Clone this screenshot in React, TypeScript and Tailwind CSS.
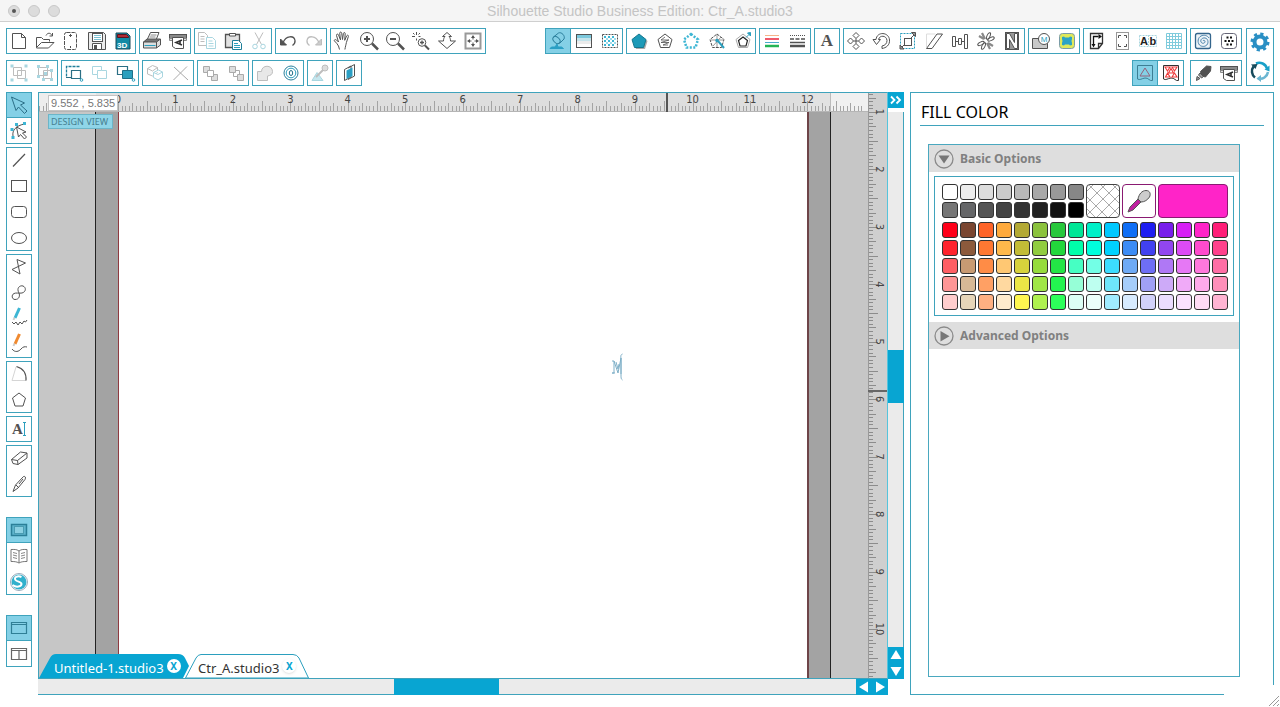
import React from 'react';

type Tool = { label: string; icon: React.ReactNode; active?: boolean };

const DARK = '#525252';
const TEAL = '#2b9fbe';
const PALE = '#a9d6e0';
const FADED = '#bdbdbd';

/* ---------- top row, left ---------- */

const fileTools: Tool[] = [
  { label: 'New', icon: <path d="M6.500 5.500h9l4 4v11h-13z M15.500 5.500v4h4" /> },
  {
    label: 'Open',
    icon: <path d="M4.500 19.500V9.500h5l2 2h6v2 M4.500 19.500l5-5h12.500l-5.500 5.500h-12z M14 7.500c1.500-3 4.500-3 6 0 M17.500 8h3V5" />,
  },
  {
    label: 'Open library',
    icon: (
      <>
        <rect x="6.500" y="4.500" width="12" height="17" rx="2" strokeDasharray="4 1" />
        <path d="M12.500 6v3 M11 7.500h3 M12.500 18v2" />
      </>
    ),
  },
  {
    label: 'Save',
    icon: (
      <>
        <path d="M4.500 4.500h15l2 2v15h-17z" fill="#ececec" />
        <rect x="8.500" y="5.500" width="10" height="8" fill="#fff" />
        <path d="M10 7.500h7 M10 9.500h7 M10 11.500h7" stroke="#7cc0d2" />
        <path d="M8.500 21v-5.500h9V21" fill="#fff" />
        <rect x="10" y="17" width="3" height="4" fill={DARK} stroke="none" />
      </>
    ),
  },
  {
    label: 'Save to SD card',
    icon: (
      <>
        <path d="M6 5h11l3 3v13H6z" fill="#128aa5" stroke="#1b4a5a" />
        <path d="M7.500 6.500h9l2 2v1h-11z" fill="#b02a34" stroke="#5a1620" />
        <text x="7" y="19.500" fontSize="8" fontWeight="700" fill="#fff" stroke="none">3D</text>
      </>
    ),
  },
];

const cutterPage = (
  <>
    <rect x="4.500" y="6.500" width="17" height="4" fill="#8a8a8a" />
    <path d="M4.500 10.500h3v2h-3z M18.500 10.500h3v2h-3z" fill="#ddd" stroke="#888" />
    <path d="M7.500 9.500h11v11h-8l-3-2z" fill="#fff" />
    <path d="M17 12l-6 2.500 6 2.500 M15 13v3" strokeWidth="1.600" stroke="#333" />
  </>
);

const printTools: Tool[] = [
  {
    label: 'Print',
    icon: (
      <>
        <path d="M8 12l3.500-7.500h8.500L17 12" fill="#fff" />
        <path d="M11.500 7h6 M10.500 9h6" stroke="#888" />
        <path d="M4.500 14l3.500-3h13l-3.500 3.500z" fill="#777" />
        <path d="M4.500 14h13v6h-13z M17.500 14l4-3v6l-4 3z" fill="#ddd" />
        <path d="M5.500 17.500h11" stroke={TEAL} />
      </>
    ),
  },
  { label: 'Send to cutter', icon: cutterPage },
];

const clipboardTools: Tool[] = [
  {
    label: 'Copy',
    icon: (
      <>
        <path d="M4.500 4.500h6l3 3v10h-9z M6.500 8.500h4 M6.500 11h4 M6.500 13.500h4" stroke={FADED} />
        <path d="M12.500 9.500h6l3 3v8h-9z" fill="#fff" stroke={PALE} />
        <path d="M14.500 13h4 M14.500 15.500h5 M14.500 18h5" stroke={PALE} />
      </>
    ),
  },
  {
    label: 'Paste',
    icon: (
      <>
        <path d="M5.500 6.500h14v13h-14z" fill="#e2e2e2" strokeWidth="1.300" />
        <path d="M9.500 8V5.500h6V8z" fill="#fff" />
        <path d="M12.500 12.500h6l3 3v6h-9z" fill="#fff" stroke="#1f7f9a" />
        <path d="M14 15.500h4 M14 17.500h6 M14 19.500h6" stroke={TEAL} />
      </>
    ),
  },
  {
    label: 'Cut',
    icon: (
      <>
        <path d="M9 4.500l6.500 12 M17 4.500l-6.500 12" stroke={FADED} />
        <circle cx="9" cy="18.500" r="2.300" stroke={PALE} />
        <circle cx="17" cy="18.500" r="2.300" stroke={PALE} />
      </>
    ),
  },
];

const historyTools: Tool[] = [
  {
    label: 'Undo',
    icon: (
      <>
        <path d="M5.500 11v6h6z" fill={DARK} />
        <path d="M8 14.500c3-7 11-7.500 12-2 .3 2-.5 3.500-2.500 5" strokeWidth="1.300" />
      </>
    ),
  },
  {
    label: 'Redo',
    icon: (
      <g stroke={FADED}>
        <path d="M20.500 11v6h-6z" fill="#ccc" />
        <path d="M18 14.500c-3-7-11-7.500-12-2-.3 2 .5 3.500 2.500 5" strokeWidth="1.300" />
      </g>
    ),
  },
];

const viewTools: Tool[] = [
  {
    label: 'Pan',
    icon: <path d="M9.500 21.500l-1-3.500c-1-2-2.500-3.500-4-5-.8-1 .8-2 2-1l2 2-2-6.500c-.3-1.600 1.400-2 2-.6l2 5-.8-6.700c0-1.500 1.800-1.500 2 0l.8 6.300.9-6c.3-1.400 2-1.200 1.800.3l-.5 6.500 2-4.500c.7-1.200 2-.6 1.700.7l-2 6c-.5 2.500-1 4-1.500 7" />,
  },
  {
    label: 'Zoom in',
    icon: (
      <>
        <circle cx="11" cy="11" r="6.500" />
        <path d="M11 8v6 M8 11h6" strokeWidth="2" />
        <path d="M16 15.500l6 6" strokeWidth="2.500" />
      </>
    ),
  },
  {
    label: 'Zoom out',
    icon: (
      <>
        <circle cx="11" cy="11" r="6.500" />
        <path d="M8 11h6" strokeWidth="2" />
        <path d="M16 15.500l6 6" strokeWidth="2.500" />
      </>
    ),
  },
  {
    label: 'Zoom selection',
    icon: (
      <>
        <path d="M8.500 4v3 M4 8.500h3 M10.500 8.500h2 M8.500 10.500v2 M5 5l1.500 1.500 M12 5l-1.500 1.500" />
        <circle cx="14" cy="14.500" r="3.800" />
        <path d="M14 12.500v4 M12 14.500h4" strokeWidth="1.300" />
        <path d="M17 17.500l4 4" strokeWidth="2" />
      </>
    ),
  },
  {
    label: 'Drag zoom',
    icon: <path d="M13 20.500L4.500 13h5c0-2 .5-3.500 1.500-4.500H8.500l4.500-4 4.500 4H15c1 1 1.500 2.500 1.500 4.500h5z" />,
  },
  {
    label: 'Fit to page',
    icon: (
      <>
        <rect x="5.500" y="5.500" width="15" height="15" stroke="#999" strokeWidth="2" />
        <path d="M13 7l2 3h-4z M13 19l2-3h-4z M7 13l3-2v4z M19 13l-3-2v4z" fill={DARK} stroke="none" />
        <path d="M13 10v1.500 M13 14.500V16 M10 13h1.500 M14.500 13H16" />
      </>
    ),
  },
];

/* ---------- top row, right ---------- */

const fillTools: Tool[] = [
  {
    label: 'Fill color',
    active: true,
    icon: (
      <g stroke="#2b7f9c">
        <path d="M8.500 9l5-4c3-1.500 7 3 5.500 6l-4.500 4.500" />
        <ellipse cx="11.500" cy="12" rx="2.800" ry="4.200" transform="rotate(-45 11.500 12)" />
        <path d="M5 20.500h13.500l-2-1.500h-3.500l-1-3-2 3H6.500z" fill="#2b9fc4" stroke="#2b9fc4" />
      </g>
    ),
  },
  {
    label: 'Fill gradient',
    icon: (
      <>
        <rect x="5.500" y="6.500" width="15" height="13" fill="#fff" />
        <path d="M6 7h14v3H6z" fill="#7cc8dc" stroke="none" />
        <path d="M6 10h14v3H6z" fill="#c4e4ec" stroke="none" />
        <path d="M6 13h14v3H6z" fill="#ececec" stroke="none" />
      </>
    ),
  },
  {
    label: 'Fill pattern',
    icon: (
      <>
        <rect x="5.500" y="6.500" width="15" height="13" strokeDasharray="2 1" />
        <path d="M7 9h12 M7 13h12 M7 17h12" stroke="#3db6d4" strokeWidth="2" strokeDasharray="2 2" />
        <path d="M9 11h10 M9 15h10" stroke="#3db6d4" strokeDasharray="2 2" />
      </>
    ),
  },
];

const pentagon = 'M13 6l7 5.500-2.500 8h-9l-2.500-8z';

const sketchTools: Tool[] = [
  {
    label: 'Shadow',
    icon: (
      <>
        <path d="M14.500 7.500l7 5.500-2.500 8h-9l-2.500-8z" fill="#aaa" stroke="none" />
        <path d={pentagon} fill="#1d9ab8" stroke="#14788f" />
      </>
    ),
  },
  {
    label: 'Sketch',
    icon: (
      <>
        <path d={pentagon} />
        <path d="M13 9l-4 3h8l-8 2.500h8l-6 2.500h5" strokeWidth=".8" />
      </>
    ),
  },
  {
    label: 'Rhinestones',
    icon: <path d={pentagon} stroke="#3db6d4" strokeWidth="2.500" strokeDasharray="2 1.500" />,
  },
  {
    label: 'Trace',
    icon: (
      <>
        <path d={pentagon} strokeDasharray="3 1" />
        <path d="M13 7v12 M7 12h12 M9 18l8-9" strokeWidth=".6" />
        <path d="M14 13l6 7" stroke={TEAL} strokeWidth="2" />
        <circle cx="13" cy="12.500" r="1.700" fill={TEAL} stroke="none" />
      </>
    ),
  },
  {
    label: 'Offset',
    icon: (
      <>
        <path d={pentagon} stroke="#aaa" />
        <path d="M13 9l4.500 3.500-1.500 5.500h-6l-1.500-5.500z" stroke="#222" strokeWidth="1.200" />
        <path d="M16 9.500l3-3" stroke={TEAL} />
        <path d="M20.500 4.500v3.500l-3-3z" fill={TEAL} stroke={TEAL} />
      </>
    ),
  },
];

const lineTools: Tool[] = [
  {
    label: 'Line color',
    icon: (
      <>
        <path d="M6 7.500h14" stroke="#f6b48a" />
        <path d="M6 11h14" stroke="#ee5a6a" strokeWidth="2" />
        <path d="M6 14.500h14" stroke="#4aa9cc" />
        <path d="M6 18h14" stroke="#23b455" strokeWidth="2.500" />
      </>
    ),
  },
  {
    label: 'Line style',
    icon: (
      <>
        <path d="M5 7.500h15" strokeDasharray="1 1" />
        <path d="M5 11h15" strokeWidth="1.500" strokeDasharray="4 1.500" />
        <path d="M5 14.500h15" strokeWidth="1.500" />
        <path d="M5 18h15" strokeWidth="2.500" />
      </>
    ),
  },
];

const letterA = (
  <text x="13" y="18" fontSize="17" fontWeight="700" textAnchor="middle" fontFamily="Liberation Serif, serif" fill={DARK} stroke="none">
    A
  </text>
);

const transformTools: Tool[] = [
  {
    label: 'Move',
    icon: <path d="M13 4.500l3 3-3 3-3-3z M13 15.500l3 3-3 3-3-3z M7.500 10l3 3-3 3-3-3z M18.500 10l3 3-3 3-3-3z M13 10.500v5 M10.500 13h5" />,
  },
  {
    label: 'Rotate',
    icon: <path d="M4 11.500l3.500 5 4-5H9.500c1-4.500 8-4.500 8.500 1 0 3-2 5-5 5.500v2.500c4-.5 8-3.500 7.500-8.500C20 4 8 3 7 11.500z" />,
  },
  {
    label: 'Scale',
    icon: (
      <>
        <path d="M5.500 5.500h14v15h-14z" stroke={TEAL} strokeDasharray="2 1" />
        <rect x="9.500" y="10.500" width="7" height="7" />
        <path d="M16.500 4.500h4v4z M5 17v4h4z" fill="#999" />
        <path d="M16 10l3-3 M7 19l3-3" />
      </>
    ),
  },
  {
    label: 'Shear',
    icon: (
      <>
        <path d="M5.500 20.500l10.500-14.500h5.500l-10.500 14.500z" />
        <path d="M5.500 19V6h9" stroke="#ddd" />
      </>
    ),
  },
  {
    label: 'Align',
    icon: <path d="M5.500 8.500h3v10h-3z M11.500 10.500h3v6h-3z M17.500 6.500h3v14h-3z M8.500 13.500h3 M14.500 13.500h3" />,
  },
  {
    label: 'Replicate',
    icon: (
      <>
        <path d="M6 8l5 3 M20 18l-5-3 M9 5l3 6 M17 21l-3-6" strokeWidth="2.200" stroke="#888" />
        <ellipse cx="15.500" cy="8" rx="1.500" ry="3.500" transform="rotate(25 15.500 8)" />
        <ellipse cx="18" cy="11" rx="1.500" ry="3.500" transform="rotate(65 18 11)" />
        <ellipse cx="10.500" cy="18" rx="1.500" ry="3.500" transform="rotate(25 10.500 18)" />
        <ellipse cx="8" cy="15.500" rx="1.500" ry="3.500" transform="rotate(65 8 15.500)" />
      </>
    ),
  },
  {
    label: 'Nesting',
    icon: (
      <>
        <rect x="6.500" y="4.500" width="13" height="17" fill="#999" />
        <path d="M7.500 20.500v-15h3l5 9v-9h3v15h-3l-5-9v9z" fill="#fff" />
      </>
    ),
  },
];

const modifyTools: Tool[] = [
  {
    label: 'Modify',
    icon: (
      <>
        <path d="M4.500 10.500h15v10h-15z" fill="#c8c8c8" />
        <circle cx="16" cy="11" r="5.500" fill="#fff" />
        <text x="16" y="14" fontSize="8" textAnchor="middle" fill={TEAL} stroke="none">M</text>
      </>
    ),
  },
  {
    label: 'Pixscan',
    icon: (
      <>
        <rect x="5.500" y="5.500" width="15" height="15" rx="3" fill="#dfe95a" stroke="#7a9ca8" />
        <path d="M8 9l2-.5 1 1h4l1-1 2 .5v2l-.5 2 .5 2v2l-2 .5-1-1h-4l-1 1L8 17v-2l.5-2-.5-2z" fill="#2ba3c6" stroke="none" />
      </>
    ),
  },
];

const pageTools: Tool[] = [
  {
    label: 'Page setup',
    icon: (
      <>
        <path d="M7.500 5.500h12v10l-4 5h-8z M19.500 15.500h-4v5" stroke="#333" strokeWidth="1.300" />
        <path d="M10.500 17V8.500h5" stroke="#111" strokeWidth="1.300" />
        <path d="M15.500 6l3.500 2.500-3.500 2.500z M8.500 16h4l-2 3.500z" fill="#111" stroke="none" />
      </>
    ),
  },
  {
    label: 'Registration marks',
    icon: (
      <>
        <rect x="7.500" y="4.500" width="12" height="17" stroke="#999" />
        <path d="M9.500 10V7.500H12 M15 7.500h2.500V10 M17.500 16v2.500H15 M12 18.500H9.500V16" />
      </>
    ),
  },
  {
    label: 'Text outline',
    icon: (
      <>
        <path d="M4.500 7.500h17v11h-17z M13.500 7v11" stroke={PALE} strokeDasharray="2 1" />
        <text x="5" y="17" fontSize="11" fill="#222" stroke="none" fontWeight="700">A</text>
        <text x="14.500" y="17" fontSize="11" fill="#222" stroke="none" fontWeight="700">b</text>
      </>
    ),
  },
  {
    label: 'Grid',
    icon: <path d="M5.500 5.500h15v15h-15z M8.500 5v16 M11.500 5v16 M14.500 5v16 M17.500 5v16 M5 8.500h16 M5 11.500h16 M5 14.500h16 M5 17.500h16" stroke="#7fcbdc" />,
  },
];

const mediaTools: Tool[] = [
  {
    label: 'Emboss',
    icon: (
      <>
        <rect x="5.500" y="5.500" width="15" height="15" rx="2" fill="#eef4f8" stroke="#34658c" strokeWidth="1.300" />
        <path d="M13 13c.5-1.500 2-.5 2 .5 0 2-3 2.500-4 .5-1-2.500 1.500-4.500 4-4 3 .5 3.500 4 2.500 6-1.500 3-6 3-8 1-2.500-3-1.500-7.500 1.500-9 3-1.500 6.500-.5 8 2" stroke="#4a82ab" />
      </>
    ),
  },
  {
    label: 'Stipple',
    icon: (
      <>
        <rect x="5.500" y="5.500" width="15" height="15" rx="3" stroke="#667" />
        <path d="M10.500 9.500h7 M8.500 13h9 M10.500 16.500h7" stroke="#111" strokeWidth="2" strokeDasharray="2 1.500" />
      </>
    ),
  },
];

/* ---------- second row ---------- */

const groupTools: Tool[] = [
  {
    label: 'Group',
    icon: (
      <>
        <path d="M7.500 7.500h8v8h-8z M11.500 10.500h8v8h-8z" stroke={FADED} />
        <path d="M4.500 4.500h3v3h-3z M18.500 4.500h3v3h-3z M4.500 18.500h3v3h-3z M18.500 18.500h3v3h-3z" fill={PALE} stroke="none" />
      </>
    ),
  },
  {
    label: 'Ungroup',
    icon: (
      <>
        <path d="M6.500 7.500h9v8h-9z M11.500 10.500h8v8h-8z" stroke={FADED} />
        <path d="M5 5h3v3H5z M14 5h3v3h-3z M5 15h3v3H5z M18 9h3v3h-3z M10 18h3v3h-3z M18 18h3v3h-3z M12 12h3v3h-3z" fill={PALE} stroke="none" />
      </>
    ),
  },
];

const orderTools: Tool[] = [
  {
    label: 'Select all',
    icon: (
      <>
        <path d="M5.500 16.500v-10h9 M15.500 6.500h4" stroke="#1f7f9a" strokeWidth="1.300" strokeDasharray="3 1" />
        <path d="M10.500 10.500h9v8h-9z M5 17.500h5" stroke="#2b6f85" strokeWidth="1.200" />
        <circle cx="20.500" cy="20" r="1.300" stroke={TEAL} />
      </>
    ),
  },
  {
    label: 'Deselect',
    icon: <path d="M5.500 6.500h9v4h5v8h-9v-4h-5z M10.500 14.500v-4h4" stroke={PALE} />,
  },
  {
    label: 'Select by color',
    icon: (
      <>
        <path d="M4.500 6.500h10v8h-10z" stroke="#2b6f85" strokeWidth="1.200" />
        <path d="M9.500 10.500h10v8h-10z" fill={TEAL} stroke="#1f6f88" />
        <circle cx="20.500" cy="20" r="1.300" stroke={TEAL} />
      </>
    ),
  },
];

const releaseTools: Tool[] = [
  {
    label: 'Duplicate',
    icon: (
      <>
        <path d="M5.500 8.500l5-3 5 2v5l-5 3.500-5-2z M5.500 8.500l5 2.500 5-3.500" stroke={FADED} />
        <path d="M11.500 12.500l5-2.500 4 2v5l-4.500 3-4.500-2.500z M11.500 12.500l4.500 2 4.500-2.500" fill="#fff" stroke={PALE} />
      </>
    ),
  },
  { label: 'Delete', icon: <path d="M6 7l14 13 M19 6.500L5.500 20" stroke="#aaa" /> },
];

const arrangeTools: Tool[] = [
  {
    label: 'Bring to front',
    icon: (
      <g stroke="#aaa">
        <path d="M6.500 6.500h6v6h-6z M14.500 14.500h6v6h-6z" fill="#ddd" />
        <path d="M10.500 10.500h6v6h-6z" fill="#fff" />
      </g>
    ),
  },
  {
    label: 'Send to back',
    icon: (
      <g stroke="#aaa">
        <path d="M10.500 10.500h6v6h-6z" fill="#fff" />
        <path d="M6.500 6.500h6v6h-6z M14.500 14.500h6v6h-6z" fill="#ddd" />
      </g>
    ),
  },
];

const weldTools: Tool[] = [
  { label: 'Weld', icon: <path d="M5.500 11.500h4c0-7 11-7 11 0 0 3-2 4-5 4.500v4.500h-10z" fill="#e8e8e8" stroke={FADED} /> },
  {
    label: 'Offset path',
    icon: (
      <>
        <circle cx="13" cy="13" r="7" stroke="#2b7f9c" />
        <circle cx="13" cy="13" r="4.800" stroke={TEAL} />
        <ellipse cx="13" cy="13" rx="1.700" ry="2.500" stroke="#1f6f88" />
      </>
    ),
  },
];

const pickTool: Tool[] = [
  {
    label: 'Pick style',
    icon: (
      <>
        <path d="M5 20.500l5-8 6 8z" fill="#c5e6ee" stroke={PALE} />
        <path d="M9 17l7-7" stroke={FADED} strokeWidth="2" />
        <circle cx="18" cy="8" r="3" fill="#ddd" stroke={FADED} />
      </>
    ),
  },
];

const layerTool: Tool[] = [
  {
    label: 'Layers',
    icon: (
      <>
        <path d="M8.500 9.500l6.500-3.500v11l-6.500 3.500z" fill="#fff" />
        <path d="M10.500 10.500l6-3v8.500l-6 3z" fill="#2b9fc4" stroke="none" />
        <path d="M12 8l6.500-3.500v11.500l-6.500 3.500" />
      </>
    ),
  },
];

const mark = 'M5.500 5.500h15v15c-3 1-4-3-7.500-2.500s-5 2.500-7.500 1z';

const cutPreviewTools: Tool[] = [
  {
    label: 'Design',
    active: true,
    icon: (
      <>
        <path d={mark} stroke="#3c7f95" />
        <path d="M13 8l5 8H8z" stroke="#94607a" />
      </>
    ),
  },
  {
    label: 'Preview',
    icon: (
      <>
        <path d={mark} stroke="#333" />
        <path d="M7 7h5l-2.500 4z M14 7h5l-2.500 4z M13 8.500l2.500 4.500h-5z M7.500 17l2-4 2.500 4z M14 17l2.500-4 2.500 4z" stroke="#ee3a3a" strokeWidth="1.100" />
      </>
    ),
  },
];

const sendTools: Tool[] = [
  {
    label: 'Blade settings',
    icon: (
      <>
        <path d="M10.500 11.500l6-5.500 4.500.5-.5 4.500-5 6-4-1z" fill={DARK} />
        <path d="M10 13l3.500 3.500-2 1.500-3-3z M7 16.500l3 2-3.500 2z" fill="#999" />
      </>
    ),
  },
  { label: 'Send', icon: cutterPage },
];

/* ---------- side bar ---------- */

const sideTools: Tool[][] = [
  [
    {
      label: 'Select',
      active: true,
      icon: <path d="M5.500 5l13 6-4 2 6.500 6-2.500 2.500-6-6.500-2.500 3.500z" stroke="#2b6f88" />,
    },
    {
      label: 'Edit points',
      icon: (
        <>
          <path d="M7 18c-1-6 3-10 11-12" />
          <path d="M9 5h3v3H9z M17 4h3v3h-3z M4.500 10h3v3h-3z M5.500 18h3v3h-3z" fill="#3db6d4" stroke="none" />
          <path d="M10.500 9l9.500 5-3.500 1 4 4-2 2-4-4.500-2 2.500z" fill="#fff" />
        </>
      ),
    },
  ],
  [
    { label: 'Line', icon: <path d="M7 19.500L19 7" strokeWidth="1.200" /> },
    { label: 'Rectangle', icon: <rect x="5.500" y="7.500" width="15" height="11" /> },
    { label: 'Rounded rectangle', icon: <rect x="5.500" y="7.500" width="15" height="11" rx="3" /> },
    { label: 'Ellipse', icon: <ellipse cx="13" cy="13" rx="7.500" ry="5.500" /> },
  ],
  [
    { label: 'Polygon', icon: <path d="M11 5.500l8.500 3.500-13.500 6.500 8 4.500z" /> },
    {
      label: 'Curve',
      icon: <path d="M13 13c-3-5 1-8 4-7 3.500 1.500 3 6-1 7-3 .5-6-.5-8 .5-3 1.500-2 6 1 6 4.500 0 5-4 4-6.500z" />,
    },
    {
      label: 'Freehand',
      icon: (
        <>
          <path d="M9 12l4.500-10" stroke="#3db6d4" strokeWidth="3" />
          <path d="M7.500 14l1-2.500" stroke="#ccc" strokeWidth="2" />
          <path d="M6 16l2 2 2-2 2 3 2-3 2 2 2-3 1.500 1 1.500-2" />
        </>
      ),
    },
    {
      label: 'Smooth freehand',
      icon: (
        <>
          <path d="M9 12l4.500-10" stroke="#f08a30" strokeWidth="3" />
          <path d="M7.500 14l1-2.500" stroke="#ccc" strokeWidth="2" />
          <path d="M6 17c3 4 7 2.500 9 0s4-2.500 6-2" />
        </>
      ),
    },
  ],
  [
    {
      label: 'Arc',
      icon: (
        <>
          <path d="M10 6L6 19.500h14" stroke="#d5d5d5" />
          <path d="M10.500 5.500c7 2 10 7 9.500 14" strokeWidth="1.200" />
        </>
      ),
    },
    { label: 'Regular polygon', icon: <path d="M13 6l6.500 5-2.500 8h-8l-2.500-8z" /> },
  ],
  [
    {
      label: 'Text',
      icon: (
        <>
          <text x="6" y="18" fontSize="15" fontWeight="700" fontFamily="Liberation Serif, serif" fill={DARK} stroke="none">A</text>
          <path d="M17 6.500h3 M18.500 6.500v13 M17 19.500h3" stroke={TEAL} />
        </>
      ),
    },
  ],
  [
    {
      label: 'Eraser',
      icon: <path d="M5.500 14.500l9-7.500 6.500 1v5l-9 6.500-5-1z M5.500 14.500l6 1 9.500-7.500 M11.500 15.500l.5 4" />,
    },
    {
      label: 'Knife',
      icon: <path d="M7 20.500l2.500-6.500 8-8.500c2-.5 2.500 1 1.500 3l-7 8.500z M10 14l2.500 2.500 M13 13l4-5" />,
    },
  ],
];

const pageViewTools: Tool[] = [
  {
    label: 'Page view',
    active: true,
    icon: (
      <>
        <rect x="5.500" y="7.500" width="15" height="11" fill="#5fb4cc" stroke="#2b7f98" strokeWidth="1.500" />
        <rect x="8.500" y="9.500" width="9" height="7" fill="#8bd0e2" stroke="#4a9cb2" />
      </>
    ),
  },
  {
    label: 'Library',
    icon: (
      <>
        <path d="M13 8c-2.500-2-5-1.500-8-1.500v12c3 0 5.500 0 8 1.500 2.500-1.500 5-1.500 8-1.500v-12c-3 0-5.500-.5-8 1.500z M13 8v12" stroke="#777" />
        <path d="M7 9.500l4 1 M7 12l4 1 M7 14.500l4 1 M19 9.500l-4 1 M19 12l-4 1 M19 14.500l-4 1" stroke="#888" />
      </>
    ),
  },
  {
    label: 'Store',
    icon: (
      <>
        <circle cx="13" cy="13" r="8.500" fill="#fff" stroke="#9ab" />
        <circle cx="13" cy="13" r="7.500" fill="#31b0cc" stroke="none" />
        <path d="M15.500 8c-4-2-8 .5-6 3 1.500 2 6 1.500 6 4s-5 4-9 1" stroke="#fff" strokeWidth="2" />
      </>
    ),
  },
];

const splitTools: Tool[] = [
  {
    label: 'Single view',
    active: true,
    icon: <path d="M5.500 7.500h15v11h-15z M5.500 9.500h15" stroke="#2f7f96" strokeWidth="1.200" />,
  },
  { label: 'Split view', icon: <path d="M5.500 7.500h15v11h-15z M5.500 9.500h15 M13 9.500v9" stroke="#666" strokeWidth="1.200" /> },
];

/* ---------- fill palette ---------- */

const grays = [
  'bg-[#ffffff]', 'bg-[#ececec]', 'bg-[#dcdcdc]', 'bg-[#cbcbcb]', 'bg-[#b9b9b9]', 'bg-[#a8a8a8]', 'bg-[#989898]', 'bg-[#878787]',
  'bg-[#767676]', 'bg-[#656668]', 'bg-[#545454]', 'bg-[#444444]', 'bg-[#333333]', 'bg-[#222222]', 'bg-[#111111]', 'bg-[#000000]',
];

const colors = [
  'bg-[#ff0019]', 'bg-[#7a4631]', 'bg-[#ff6428]', 'bg-[#ffaa3c]', 'bg-[#b3a934]', 'bg-[#8bc23c]', 'bg-[#28c83c]', 'bg-[#00e696]',
  'bg-[#00f0c8]', 'bg-[#00c8ff]', 'bg-[#0f6ef5]', 'bg-[#1e1ef0]', 'bg-[#781eeb]', 'bg-[#d720f5]', 'bg-[#ff24c8]', 'bg-[#ff1e78]',
  'bg-[#ff232d]', 'bg-[#8c5a3c]', 'bg-[#ff7832]', 'bg-[#ffb94b]', 'bg-[#c3bc37]', 'bg-[#91cc40]', 'bg-[#23d73c]', 'bg-[#00ffaa]',
  'bg-[#00ffdc]', 'bg-[#00d2ff]', 'bg-[#3c8cf5]', 'bg-[#4141f0]', 'bg-[#9146f0]', 'bg-[#dc4bf5]', 'bg-[#ff4bcd]', 'bg-[#ff418c]',
  'bg-[#ff5f64]', 'bg-[#c89b73]', 'bg-[#ff8c46]', 'bg-[#ffc873]', 'bg-[#d7d23c]', 'bg-[#96dc3c]', 'bg-[#23e646]', 'bg-[#46ffc3]',
  'bg-[#73ffe6]', 'bg-[#3cdcff]', 'bg-[#6eaaf5]', 'bg-[#6e6ef5]', 'bg-[#af78f5]', 'bg-[#e678f5]', 'bg-[#ff78dc]', 'bg-[#ff6ea5]',
  'bg-[#ff9696]', 'bg-[#d7b996]', 'bg-[#ffa064]', 'bg-[#ffd9a0]', 'bg-[#ebe646]', 'bg-[#a0e646]', 'bg-[#23f550]', 'bg-[#96ffd7]',
  'bg-[#befff0]', 'bg-[#6ee6fa]', 'bg-[#a5cdfa]', 'bg-[#a0a0f5]', 'bg-[#cdaaf8]', 'bg-[#f0aaf8]', 'bg-[#ffaaeb]', 'bg-[#ff8fb9]',
  'bg-[#ffcdcd]', 'bg-[#e6d5b9]', 'bg-[#ffb082]', 'bg-[#ffebcd]', 'bg-[#fff650]', 'bg-[#aff050]', 'bg-[#2dff5a]', 'bg-[#dcfff5]',
  'bg-[#ebfffa]', 'bg-[#a0ebff]', 'bg-[#d7ebff]', 'bg-[#d2d2fa]', 'bg-[#ebdcff]', 'bg-[#fae1ff]', 'bg-[#ffdcf5]', 'bg-[#ffb4d2]',
];

const ToolGroup = ({ tools, vertical }: { tools: Tool[]; vertical?: boolean }) => (
  <div className={`flex outline-1 -outline-offset-1 outline-[#3fa3bc] ${vertical ? 'flex-col' : ''}`}>
    {tools.map((tool) => (
      <button
        key={tool.label}
        type="button"
        aria-label={tool.label}
        className={`size-[26px] ${tool.active ? 'bg-[#84d0e6] outline-1 -outline-offset-1 outline-[#3fa3bc]' : ''}`}
      >
        <svg width="26" height="26" viewBox="0 0 26 26" fill="none" stroke={DARK}>
          {tool.icon}
        </svg>
      </button>
    ))}
  </div>
);

// One inch of the mat at the current zoom
const INCH = 57.45;

const tickLength = (i: number) => {
  if (i % 8 === 0) return 10;
  return i % 4 === 0 ? 8 : 5;
};

const HorizontalRuler = () => {
  const zero = 79;
  const ticks = Array.from({ length: 230 }, (_, i) => i - 22);
  return (
    <svg className="block h-[19px] w-full bg-[#dedede] font-['DejaVu_Sans',sans-serif]">
      <rect width="57" height="19" fill="#ededed" />
      <rect x="57" width="22" height="19" fill="#e2e2e2" />
      <rect x="769" width="23" height="19" fill="#e2e2e2" />
      <rect x="792" width="600" height="19" fill="#f0f0f0" />
      <path d="M791.500 0v19" stroke="#bbb" />
      {ticks.map((i) => {
        const x = Math.round(zero + (i * INCH) / 16) + 0.5;
        return <path key={i} d={`M${x} 18v-${tickLength(i)}`} stroke="#a4a4a4" />;
      })}
      {Array.from({ length: 13 }, (_, n) => (
        <text key={n} x={zero + n * INCH} y="10" fontSize="10" textAnchor="middle" fill="#444">
          {n}
        </text>
      ))}
      <path d="M0 18.500h1400" stroke="#b5b5b5" />
      <path d="M628 0v19" stroke="#555" strokeWidth="2" />
    </svg>
  );
};

const VerticalRuler = () => {
  const one = 19;
  const ticks = Array.from({ length: 260 }, (_, i) => i - 5);
  return (
    <svg className="block h-full w-[19px] bg-[#cfcfcf] font-['DejaVu_Sans',sans-serif]">
      {ticks.map((i) => {
        const y = Math.round(one + (i * INCH) / 16) + 0.5;
        return <path key={i} d={`M0 ${y}h${tickLength(i)}`} stroke="#8c8c8c" />;
      })}
      <path d="M.5 0v1400" stroke="#999" />
      {Array.from({ length: 10 }, (_, n) => (
        <text key={n} transform={`translate(8 ${one + n * INCH}) rotate(90)`} fontSize="10" textAnchor="middle" fill="#444">
          {n + 1}
        </text>
      ))}
      <path d="M0 298h19" stroke="#666" strokeWidth="2" />
    </svg>
  );
};

const scrollButton = 'flex size-4 items-center justify-center bg-[#08a5d2]';

const ScrollArrow = ({ label, d }: { label: string; d: string }) => (
  <button type="button" aria-label={label} className={scrollButton}>
    <svg width="16" height="16" viewBox="0 0 16 16" fill="#fff">
      <path d={d} />
    </svg>
  </button>
);

const FileTabs = () => (
  <div className="absolute bottom-0 left-0 flex font-['Noto_Sans',sans-serif] text-[13px] leading-4">
    <div className="relative flex h-6 w-[150px] items-center gap-[3px] pt-1 pl-[15px]">
      <svg className="absolute inset-0" width="150" height="24" viewBox="0 0 150 24">
        <path d="M0 24L11 4q2-4 6-4h122q5 0 7 4l4 8-6 12z" fill="#08a5d2" />
      </svg>
      <button type="button" className="relative text-white">Untitled-1.studio3</button>
      <button type="button" aria-label="Close Untitled-1.studio3" className="relative -mt-1 size-[14px] rounded-full bg-white text-[10px] leading-[14px] font-bold text-[#08a5d2]">
        X
      </button>
    </div>
    <div className="relative -ml-1 flex h-6 w-[124px] items-center gap-[3px] pt-1 pl-[13px]">
      <svg className="absolute inset-0" width="124" height="24" viewBox="0 0 124 24">
        <path d="M.5 24L11 4Q13 .5 16 .5h92q4 0 6 3.500l9.500 20z" fill="#fff" stroke={TEAL} />
      </svg>
      <button type="button" className="relative text-[#333]">Ctr_A.studio3</button>
      <button type="button" aria-label="Close Ctr_A.studio3" className="relative -mt-1 size-[14px] rounded-full bg-white text-[10px] leading-[14px] font-bold text-[#08a5d2] shadow-sm">
        X
      </button>
    </div>
  </div>
);

const Swatch = ({ color, index }: { color: string; index: number }) => (
  <button type="button" aria-label={`Color ${index + 1}`} className={`size-4 rounded-[3px] border border-[#333] ${color}`} />
);

const SectionHeader = ({ title, open }: { title: string; open?: boolean }) => (
  <button
    type="button"
    aria-expanded={!!open}
    className="flex h-[27px] w-full items-center gap-[5px] bg-[#dedede] pl-1 text-[12px] font-bold text-[#808080]"
  >
    <svg width="22" height="22" viewBox="0 0 22 22" fill="none" stroke="#8a8a8a">
      <circle cx="11" cy="11" r="9" strokeWidth="1.300" />
      <path d={open ? 'M5.500 7.500h11L11 15.500z' : 'M7.500 6v10.500l9-5.300z'} fill="#777" stroke="none" />
    </svg>
    {title}
  </button>
);

const FillPanel = () => (
  <aside className="relative flex w-[364px] shrink-0 flex-col border border-[#3fa3bc] px-[9px] pt-1 pb-[17px] font-['Noto_Sans',sans-serif]">
    <h2 className="border-b border-[#3fa3bc] pt-1 pb-[1px] pl-[1px] text-[16px] leading-[23px] text-black">FILL COLOR</h2>
    <div className="mx-2 mt-[18px] mr-6 flex flex-1 flex-col border border-[#4aa8bf]">
      <SectionHeader title="Basic Options" open />
      <div className="mx-[5px] mt-1 mb-[6px] border border-[#3fa3bc] pt-[7px] pr-[5px] pb-[5px] pl-[7px]">
        <div className="flex gap-[2px]">
          <div className="grid grid-cols-8 gap-[2px]">
            {grays.map((color, i) => (
              <Swatch key={color} color={color} index={i} />
            ))}
          </div>
          <button type="button" aria-label="No fill" className="h-[34px] w-[34px] overflow-hidden rounded-[4px] border border-[#444]">
            <svg width="32" height="32" viewBox="0 0 32 32" stroke="#aaa">
              <path d="M-3 9L9-3 M-3 21L21-3 M-1 31L33-3 M9 33L33 9 M21 33l12-12 M23-3l12 12 M11-3l24 24 M-1-3l36 36 M-3 9l24 24 M-3 21l12 12" />
            </svg>
          </button>
          <button type="button" aria-label="Pick color" className="h-[34px] w-[34px] rounded-[4px] border border-[#8a1a72]">
            <svg width="32" height="32" viewBox="0 0 32 32" fill="none">
              <path d="M5 27l2-5 8-8 3 3-8 8z" fill="#c01ea0" stroke="#555" />
              <path d="M15 14c1-5 4-8.500 8-8.500s5 3.500 3.500 6.500c-2 3-5 5-8.500 5z" fill="#ccc" stroke="#555" />
            </svg>
          </button>
          <div className="h-[34px] flex-1 rounded-[4px] border border-[#8a1a72] bg-[#ff24c8]" />
        </div>
        <div className="mt-1 grid grid-cols-16 gap-[2px]">
          {colors.map((color, i) => (
            <Swatch key={color} color={color} index={i + 16} />
          ))}
        </div>
      </div>
      <SectionHeader title="Advanced Options" />
    </div>
    {/* window resize corner */}
    <div className="absolute -right-px -bottom-px h-[10px] w-[50px] bg-white" />
  </aside>
);

export default function App() {
  return (
    <div className="flex min-h-screen flex-col bg-white font-['Liberation_Sans',sans-serif]">
      <header className="relative flex h-[22px] items-center justify-center border-b border-[#cfcfcf] bg-[#f5f5f5]">
        <div className="absolute left-2 flex gap-2">
          <span className="flex size-3 items-center justify-center rounded-full border border-[#c8c8c8] bg-[#dcdcdc]">
            <span className="size-1 rounded-full bg-[#555]" />
          </span>
          <span className="size-3 rounded-full border border-[#c8c8c8] bg-[#dcdcdc]" />
          <span className="size-3 rounded-full border border-[#c8c8c8] bg-[#dcdcdc]" />
        </div>
        <h1 className="text-[14px] leading-5 text-[#c4c4c4]">Silhouette Studio Business Edition: Ctr_A.studio3</h1>
      </header>

      <div className="flex gap-1 p-[6px]">
        <div className="flex flex-1 flex-col gap-[6px]">
          <div className="flex justify-between">
            <div className="flex gap-[3px]">
              <ToolGroup tools={fileTools} />
              <ToolGroup tools={printTools} />
              <ToolGroup tools={clipboardTools} />
              <ToolGroup tools={historyTools} />
              <ToolGroup tools={viewTools} />
            </div>
            <div className="flex gap-[3px]">
              <ToolGroup tools={fillTools} />
              <ToolGroup tools={sketchTools} />
              <ToolGroup tools={lineTools} />
              <ToolGroup tools={[{ label: 'Text style', icon: letterA }]} />
              <ToolGroup tools={transformTools} />
              <ToolGroup tools={modifyTools} />
              <ToolGroup tools={pageTools} />
              <ToolGroup tools={mediaTools} />
            </div>
          </div>
          <div className="flex justify-between">
            <div className="flex gap-[3px]">
              <ToolGroup tools={groupTools} />
              <ToolGroup tools={orderTools} />
              <ToolGroup tools={releaseTools} />
              <ToolGroup tools={arrangeTools} />
              <ToolGroup tools={weldTools} />
              <ToolGroup tools={pickTool} />
              <ToolGroup tools={layerTool} />
            </div>
            <div className="flex gap-[6px]">
              <ToolGroup tools={cutPreviewTools} />
              <ToolGroup tools={sendTools} />
            </div>
          </div>
        </div>

        <div className="flex w-7 flex-col items-center justify-between border border-[#3fa3bc]">
          <button type="button" aria-label="Preferences">
            <svg width="26" height="26" viewBox="0 0 26 26" fill="none" stroke="#2a8fc4">
              <circle cx="13" cy="13" r="5.500" strokeWidth="4" />
              <circle cx="13" cy="13" r="8" strokeWidth="3" strokeDasharray="3.140 3.143" />
            </svg>
          </button>
          <button type="button" aria-label="Sync">
            <svg width="26" height="28" viewBox="0 0 26 28" fill="none" strokeWidth="2.500">
              <path d="M9 6.500a8 8 0 0 1 11 5" stroke="#19a0c8" />
              <path d="M21 15a8 8 0 0 1-10 6.500" stroke="#6bb6d2" />
              <path d="M8 20.500a8 8 0 0 1-1.500-11" stroke="#164a5c" />
              <path d="M22.500 8.500v6l-5-2z" fill="#19a0c8" stroke="none" />
              <path d="M14 18v7l-4.500-3.500z" fill="#6bb6d2" stroke="none" />
              <path d="M4 7.500l6.500-.5-2 5z" fill="#164a5c" stroke="none" />
            </svg>
          </button>
        </div>
      </div>

      <main className="flex flex-1 gap-[6px] px-[6px] pb-3">
        <nav className="flex w-[26px] shrink-0 flex-col gap-5">
          <div className="flex flex-col gap-[3px]">
            {sideTools.map((tools) => (
              <ToolGroup key={tools[0].label} tools={tools} vertical />
            ))}
          </div>
          <ToolGroup tools={pageViewTools} vertical />
          <ToolGroup tools={splitTools} vertical />
        </nav>

        <div className="flex min-w-0 flex-1 flex-col">
          <div className="flex flex-1">
            <section className="relative flex min-w-0 flex-1 border border-[#3fa3bc] border-r-[#55c4dc]">
              <div className="flex min-w-0 flex-1 flex-col">
                <HorizontalRuler />
                <div className="flex flex-1 bg-[#c6c6c6]">
                  <div className="ml-14 w-6 border-r border-l border-r-[#8f3a40] border-l-[#222] bg-[#a3a3a3]" />
                  <div className="flex-1 bg-white" />
                  <div className="mr-[37px] w-6 border-r border-l-2 border-r-[#222] border-l-[#6e4448] bg-[#a3a3a3]" />
                </div>
              </div>
              <VerticalRuler />

              <svg className="absolute top-[259px] left-[572px]" width="14" height="30" viewBox="0 0 14 30" fill="none" stroke="#7fb0c8">
                <path d="M1 9h2v12H1 M3 9l4 12 3-15v16 M11.500 2c-2.500 1-1.500 3-1.500 6v15c0 3 0 4 1.500 5 M1 21h3 M5 10l2 7 1-5" />
              </svg>

              <div className="absolute top-[2px] left-[9px] border border-[#c4c4c4] bg-white px-[2px] text-[11px] leading-[14px] text-[#777]">
                9.552 , 5.835
              </div>
              <div className="absolute top-[21px] left-[9px] border border-[#6cb5c8] bg-[#8fd5e8] pr-1 pl-[2px] font-['Noto_Sans',sans-serif] text-[9px] leading-[13px] text-[#467f90]">
                DESIGN VIEW
              </div>

              <FileTabs />
            </section>

            <div className="flex w-4 shrink-0 flex-col">
              <button type="button" aria-label="Collapse panel" className={scrollButton}>
                <svg width="16" height="16" viewBox="0 0 16 16" fill="none" stroke="#fff" strokeWidth="1.800">
                  <path d="M3 4.500l3.500 3.500L3 11.500 M8.500 4.500L12 8l-3.500 3.500" />
                </svg>
              </button>
              <div className="mt-1 flex flex-1 flex-col border-r border-[#3fa3bc] bg-[#ebebeb] pt-[238px]">
                <div className="-mr-px h-[53px] bg-[#08a5d2]" />
              </div>
              <ScrollArrow label="Scroll up" d="M8 3l5.500 9h-11z" />
              <ScrollArrow label="Scroll down" d="M8 13L2.500 4h11z" />
            </div>
          </div>

          <div className="mr-4 flex h-4">
            <div className="flex-1 border-b border-[#3fa3bc] bg-[#ebebeb] pl-[356px]">
              <div className="h-4 w-[105px] bg-[#08a5d2]" />
            </div>
            <ScrollArrow label="Scroll left" d="M3 8l9-5.500v11z" />
            <ScrollArrow label="Scroll right" d="M13 8L4 2.500v11z" />
          </div>
        </div>

        <FillPanel />
      </main>

      <svg className="absolute right-0 bottom-0" width="13" height="13" viewBox="0 0 13 13" stroke="#999">
        <path d="M2 12L12 2 M6 12l6-6 M10 12l2-2" />
      </svg>
    </div>
  );
}
